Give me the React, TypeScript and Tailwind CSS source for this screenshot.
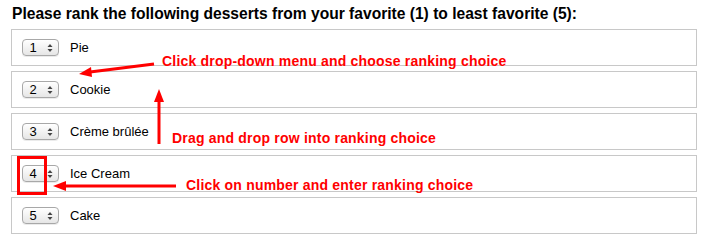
import React from 'react';

const desserts = ['Pie', 'Cookie', 'Crème brûlée', 'Ice Cream', 'Cake'];

const RankSelect: React.FC<{ value: number }> = ({ value }) => (
  <div className="flex items-center h-[17px] w-[37px] rounded-[4px] border border-[#a8a8a8] bg-gradient-to-b from-white to-[#e6e6e6] shadow-[0_1px_0_rgba(0,0,0,0.08)]">
    <span className="w-[20px] text-center text-[13px] leading-none text-black">{value}</span>
    <svg width="8" height="10" viewBox="0 0 8 10" className="ml-[3px]">
      <path d="M4 1 L6.5 4 L1.5 4 Z" fill="#444" />
      <path d="M4 9 L6.5 6 L1.5 6 Z" fill="#444" />
    </svg>
  </div>
);

export default function App() {
  return (
    <div className="relative w-[707px] h-[252px] bg-white font-['Liberation_Sans',Arial,sans-serif] overflow-hidden">
      <h1 className="pl-[12px] pt-[4.5px] h-[29px] text-[15.6px] font-bold text-black leading-[18px]">
        Please rank the following desserts from your favorite (1) to least favorite (5):
      </h1>

      <div className="ml-[11px] w-[686px] flex flex-col gap-[5px]">
        {desserts.map((d, i) => (
          <div key={d} className="h-[37px] border border-[#c8c8c8] flex items-center pl-[10px]">
            <RankSelect value={i + 1} />
            <span className="ml-[11px] text-[13px] text-black">{d}</span>
          </div>
        ))}
      </div>

      {/* annotations */}
      <svg className="absolute inset-0 pointer-events-none" width="707" height="252">
        {/* top arrow */}
        <line x1="154" y1="64" x2="90" y2="72" stroke="#ff0000" strokeWidth="3" />
        <path d="M79 74 L91 67 L92 77 Z" fill="#ff0000" />
        {/* vertical arrow */}
        <line x1="159" y1="144" x2="159" y2="100" stroke="#ff0000" strokeWidth="3" />
        <path d="M159 89 L154 102 L164 102 Z" fill="#ff0000" />
        {/* box around 4 */}
        <rect x="18.5" y="157.5" width="27" height="36" fill="none" stroke="#ff0000" strokeWidth="3" />
        {/* bottom arrow */}
        <line x1="176" y1="186" x2="64" y2="186" stroke="#ff0000" strokeWidth="3" />
        <path d="M53 186 L66 181 L66 191 Z" fill="#ff0000" />
      </svg>

      <div className="absolute left-[162px] top-[53px] text-[14px] tracking-[0.2px] font-bold text-[#ff0000] leading-[16px]">
        Click drop-down menu and choose ranking choice
      </div>
      <div className="absolute left-[172px] top-[130px] text-[14px] tracking-[0.2px] font-bold text-[#ff0000] leading-[16px]">
        Drag and drop row into ranking choice
      </div>
      <div className="absolute left-[186px] top-[177px] text-[14px] tracking-[0.2px] font-bold text-[#ff0000] leading-[16px]">
        Click on number and enter ranking choice
      </div>
    </div>
  );
}
